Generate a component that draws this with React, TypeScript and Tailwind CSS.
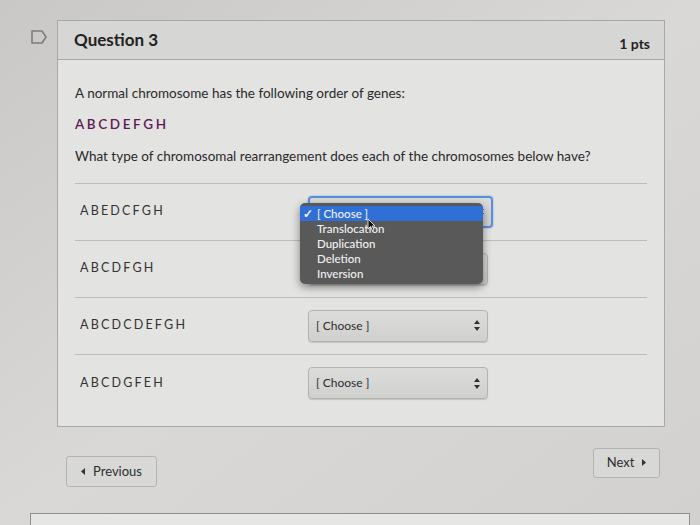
import React from "react";

function Arrows() {
  return (
    <svg width="6" height="11" viewBox="0 0 6 11" className="shrink-0">
      <path d="M3 0 L6 4 L0 4 Z" fill="#333" />
      <path d="M3 11 L6 7 L0 7 Z" fill="#333" />
    </svg>
  );
}

function Select({ focused, hideText }: { focused?: boolean; hideText?: boolean }) {
  return (
    <div
      className={
        "flex h-[32px] items-center justify-between rounded-[4px] bg-gradient-to-b from-[#dcdcda] to-[#d0d0ce] px-[7px] text-[12px] text-[#2d2d2d] " +
        (focused
          ? "w-[185px] border-2 border-[#5b8fd9] shadow-[0_0_2px_#7aa7e8]"
          : "w-[180px] border border-[#b3b3b1] shadow-[0_1px_1px_rgba(0,0,0,0.15)]")
      }
    >
      <span>{hideText ? "" : "[ Choose ]"}</span>
      <Arrows />
    </div>
  );
}

function Row({
  label,
  focused,
  hideText,
  last,
}: {
  label: string;
  focused?: boolean;
  hideText?: boolean;
  last?: boolean;
}) {
  return (
    <div className={"flex h-[57px] items-center " + (last ? "" : "border-b border-[#bdbdbb]")}>
      <div className="w-[233px] pl-[5px] text-[12.5px] tracking-[2.2px] text-[#333]">{label}</div>
      <Select focused={focused} hideText={hideText} />
    </div>
  );
}

export default function App() {
  return (
    <div
      className="relative h-[525px] w-[700px] overflow-hidden bg-gradient-to-br from-[#c9c8c6] via-[#d9d8d6] to-[#d2d1cf]"
      style={{ fontFamily: "Lato, 'Open Sans', sans-serif" }}
    >
      <div className="flex pt-[20px]">
        <div className="flex w-[57px] justify-end pr-[10px] pt-[10px]">
          <svg width="16" height="14" viewBox="0 0 16 14">
            <path d="M1 1 H11 L15 7 L11 13 H1 Z" fill="none" stroke="#7c7c80" strokeWidth="1.6" strokeLinejoin="round" />
          </svg>
        </div>
        <div className="w-[608px] border border-[#a8a8a6] bg-[#e3e3e1]">
          <div className="flex h-[39px] items-center justify-between border-b border-[#a8a8a6] bg-[#d6d6d4] pl-[16px] pr-[14px]">
            <span className="text-[17px] font-bold text-[#222]">Question 3</span>
            <span className="mt-[6px] text-[14px] font-bold text-[#222]">1 pts</span>
          </div>
          <div className="px-[17px] pb-[14px] pt-[23px]">
            <p className="text-[13.5px] text-[#2a2a2a]">A normal chromosome has the following order of genes:</p>
            <p className="mt-[11px] text-[13.5px] font-semibold tracking-[2.6px] text-[#5e1a54]">ABCDEFGH</p>
            <p className="mt-[11px] text-[13.5px] text-[#2a2a2a]">
              What type of chromosomal rearrangement does each of the chromosomes below have?
            </p>
            <div className="mt-[17px] border-t border-[#bdbdbb]">
              <Row label="ABEDCFGH" focused hideText />
              <Row label="ABCDFGH" hideText />
              <Row label="ABCDCDEFGH" />
              <Row label="ABCDGFEH" last />
            </div>
          </div>
        </div>
      </div>

      <div className="ml-[66px] mr-[40px] mt-[21px] flex items-start justify-between">
        <div className="mt-[8px] flex h-[31px] w-[91px] items-center justify-center gap-[8px] rounded-[3px] border border-[#b3b3b1] bg-[#d8d8d6] text-[13px] text-[#2d2d2d]">
          <svg width="4" height="7" viewBox="0 0 4 7"><path d="M4 0 V7 L0 3.5 Z" fill="#333" /></svg>
          Previous
        </div>
        <div className="flex h-[30px] w-[67px] items-center justify-center gap-[8px] rounded-[3px] border border-[#b3b3b1] bg-[#d8d8d6] text-[13px] text-[#2d2d2d]">
          Next
          <svg width="4" height="7" viewBox="0 0 4 7"><path d="M0 0 V7 L4 3.5 Z" fill="#333" /></svg>
        </div>
      </div>

      <div className="ml-[30px] mr-[10px] mt-[26px] h-[30px] border border-[#8f8f8d] bg-[#e6e6e4]" />

      {/* native dropdown menu overlay */}
      <div className="absolute left-[300px] top-[203px] w-[183px] rounded-[5px] bg-[#595959] py-[3px] text-[11.5px] font-medium text-[#f2f2f2] shadow-[0_3px_8px_rgba(0,0,0,0.45)]">
        <div className="flex h-[15px] items-center bg-[#2f6fd6] pl-[3px]">
          <span className="w-[14px] text-[12px] font-bold">✓</span>
          <span>[ Choose ]</span>
        </div>
        <div className="flex h-[15px] items-center pl-[17px]">Translocation</div>
        <div className="flex h-[15px] items-center pl-[17px]">Duplication</div>
        <div className="flex h-[15px] items-center pl-[17px]">Deletion</div>
        <div className="flex h-[15px] items-center pl-[17px]">Inversion</div>
      </div>
      <svg className="absolute left-[367px] top-[218px]" width="9" height="13" viewBox="0 0 9 13">
        <path d="M1 1 L1 11 L3.5 8.5 L5.5 12.5 L7 11.8 L5 8 L8 8 Z" fill="#111" stroke="#fff" strokeWidth="0.8" />
      </svg>
    </div>
  );
}
